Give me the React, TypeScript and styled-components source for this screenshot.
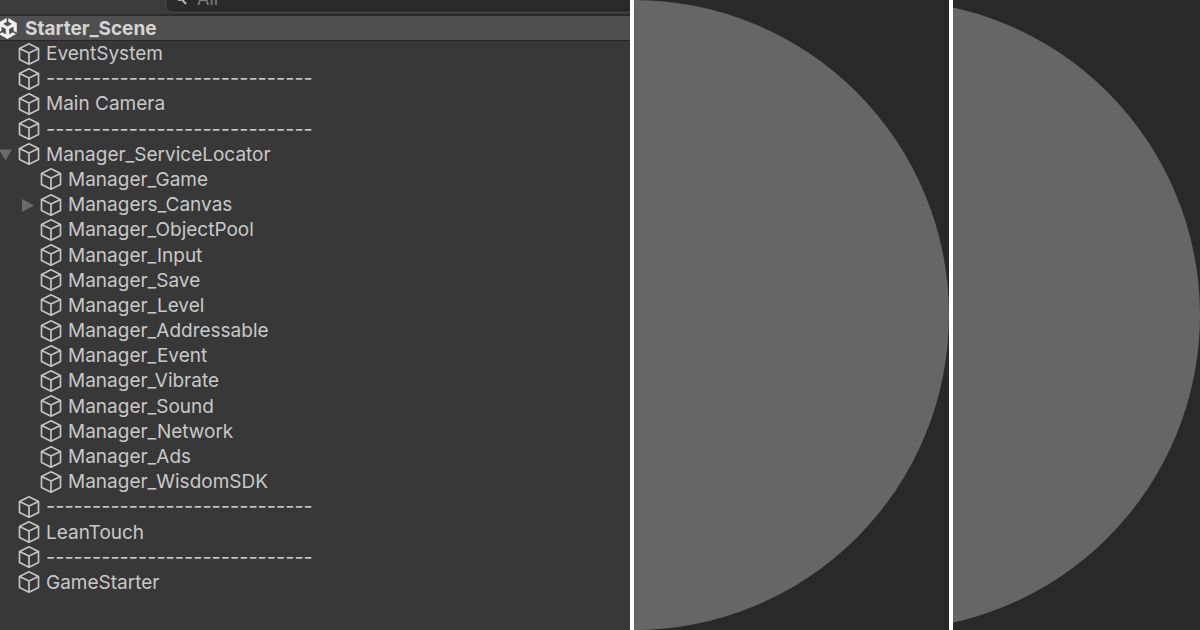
import React from "react";
import styled, { createGlobalStyle } from "styled-components";
import { SiUnity } from "react-icons/si";

const GlobalStyle = createGlobalStyle`
  * { box-sizing: border-box; }
  body { margin: 0; background: #ffffff; font-family: Inter, "Liberation Sans", sans-serif; }
`;

const Page = styled.main`
  display: grid;
  grid-template-columns: minmax(0, 630fr) minmax(0, 315fr) minmax(0, 247fr);
  gap: 4px;
  min-height: 100vh;
`;

const Hierarchy = styled.section`
  display: flex;
  flex-direction: column;
  background: #383838;
  color: #c8c8c8;
  overflow: hidden;
`;

const Toolbar = styled.div`
  display: flex;
  align-items: flex-end;
  height: 14px;
  padding: 0 0 3px 167px;
  background: #3c3c3c;
`;

const SearchField = styled.label`
  display: flex;
  flex: 1;
  align-items: center;
  gap: 8px;
  height: 24px;
  padding: 0 8px;
  background: #2a2a2a;
  border-bottom: 1px solid #202020;
  border-bottom-left-radius: 5px;
`;

const SearchInput = styled.input`
  flex: 1;
  min-width: 0;
  height: 20px;
  padding: 0;
  border: 0;
  outline: 0;
  background: transparent;
  color: #c8c8c8;
  font: 18px/20px Inter, "Liberation Sans", sans-serif;
  &::placeholder { color: #7c7c7c; opacity: 1; }
`;

const SceneHeader = styled.header`
  display: flex;
  align-items: center;
  height: 27px;
  border-top: 2px solid #2b2b2b;
  border-bottom: 1px solid #262626;
  background: #4f4f4f;
`;

const SceneIcon = styled(SiUnity)`
  width: 21px;
  height: 21px;
  margin-left: -3px;
  color: #f2f2f2;
`;

const SceneName = styled.h1`
  margin: 0 0 0 7px;
  padding-top: 2px;
  font-size: 19px;
  line-height: 22px;
  font-weight: 700;
  color: #d4d4d4;
`;

const Tree = styled.ul`
  display: flex;
  flex: 1;
  flex-direction: column;
  justify-content: space-between;
  margin: 0;
  padding: 0 0 35px;
  list-style: none;
`;

const Row = styled.li<{ $level: number }>`
  display: flex;
  align-items: center;
  gap: 6px;
  height: 25px;
  padding-left: ${({ $level }) => $level * 22}px;
  white-space: nowrap;
`;

const Label = styled.span<{ $divider: boolean }>`
  font-size: ${({ $divider }) => ($divider ? 20 : 19)}px;
  font-optical-sizing: none;
  line-height: 25px;
`;

const FoldoutSlot = styled.span`
  display: flex;
  flex: none;
  width: 12px;
`;

const Foldout = styled.button`
  display: flex;
  padding: 0;
  border: 0;
  background: none;
  color: #6a6a6a;
`;

const Cube = styled.svg`
  flex: none;
  width: 22px;
  height: 24px;
  fill: none;
  stroke: #c4c4c4;
  stroke-width: 1.7;
  stroke-linejoin: round;
`;

const Preview = styled.section`
  display: flex;
  justify-content: flex-end;
  overflow: hidden;
  background: #292929;
`;

const Disc = styled.div`
  flex: none;
  height: 100vh;
  aspect-ratio: 1;
  border-radius: 50%;
  background: #666666;
`;

type Item = { name: string; level: number; fold?: "open" | "closed" };

const divider = "-".repeat(29);
const child = (name: string, fold?: "closed"): Item => ({ name, level: 1, fold });

const items: Item[] = [
  { name: "EventSystem", level: 0 },
  { name: divider, level: 0 },
  { name: "Main Camera", level: 0 },
  { name: divider, level: 0 },
  { name: "Manager_ServiceLocator", level: 0, fold: "open" },
  child("Manager_Game"),
  child("Managers_Canvas", "closed"),
  child("Manager_ObjectPool"),
  child("Manager_Input"),
  child("Manager_Save"),
  child("Manager_Level"),
  child("Manager_Addressable"),
  child("Manager_Event"),
  child("Manager_Vibrate"),
  child("Manager_Sound"),
  child("Manager_Network"),
  child("Manager_Ads"),
  child("Manager_WisdomSDK"),
  { name: divider, level: 0 },
  { name: "LeanTouch", level: 0 },
  { name: divider, level: 0 },
  { name: "GameStarter", level: 0 },
];

const CubeIcon = () => (
  <Cube viewBox="0 0 22 24" aria-hidden="true">
    <path d="M11 1.8 L20.5 6.4 V17.4 L11 22.2 L1.5 17.4 V6.4 Z M1.5 6.4 L11 11 L20.5 6.4 M11 11 V22.2" />
  </Cube>
);

const Arrow = ({ open }: { open: boolean }) => (
  <svg width="12" height="14" viewBox="0 0 12 14" fill="currentColor" aria-hidden="true">
    <path d={open ? "M-1 2.5 H12 L5.5 13.5 Z" : "M0 1 L12 7.5 L0 14 Z"} />
  </svg>
);

export default function App() {
  return (
    <>
      <GlobalStyle />
      <Page>
        <Hierarchy>
          <Toolbar>
            <SearchField>
              <svg width="14" height="16" viewBox="0 0 14 16" fill="none" stroke="#b4b4b4" strokeWidth="2" aria-hidden="true">
                <circle cx="5" cy="5" r="4" />
                <path d="M7 8.5 L11 13" />
              </svg>
              <SearchInput type="text" placeholder="All" aria-label="Search" />
            </SearchField>
          </Toolbar>
          <SceneHeader>
            <SceneIcon aria-hidden="true" />
            <SceneName>Starter_Scene</SceneName>
          </SceneHeader>
          <Tree>
            {items.map(({ name, level, fold }, i) => (
              <Row key={i} $level={level}>
                <FoldoutSlot>
                  {fold && (
                    <Foldout type="button" aria-label={name} aria-expanded={fold === "open"}>
                      <Arrow open={fold === "open"} />
                    </Foldout>
                  )}
                </FoldoutSlot>
                <CubeIcon />
                <Label $divider={name === divider}>{name}</Label>
              </Row>
            ))}
          </Tree>
        </Hierarchy>
        <Preview>
          <Disc />
        </Preview>
        <Preview>
          <Disc />
        </Preview>
      </Page>
    </>
  );
}
